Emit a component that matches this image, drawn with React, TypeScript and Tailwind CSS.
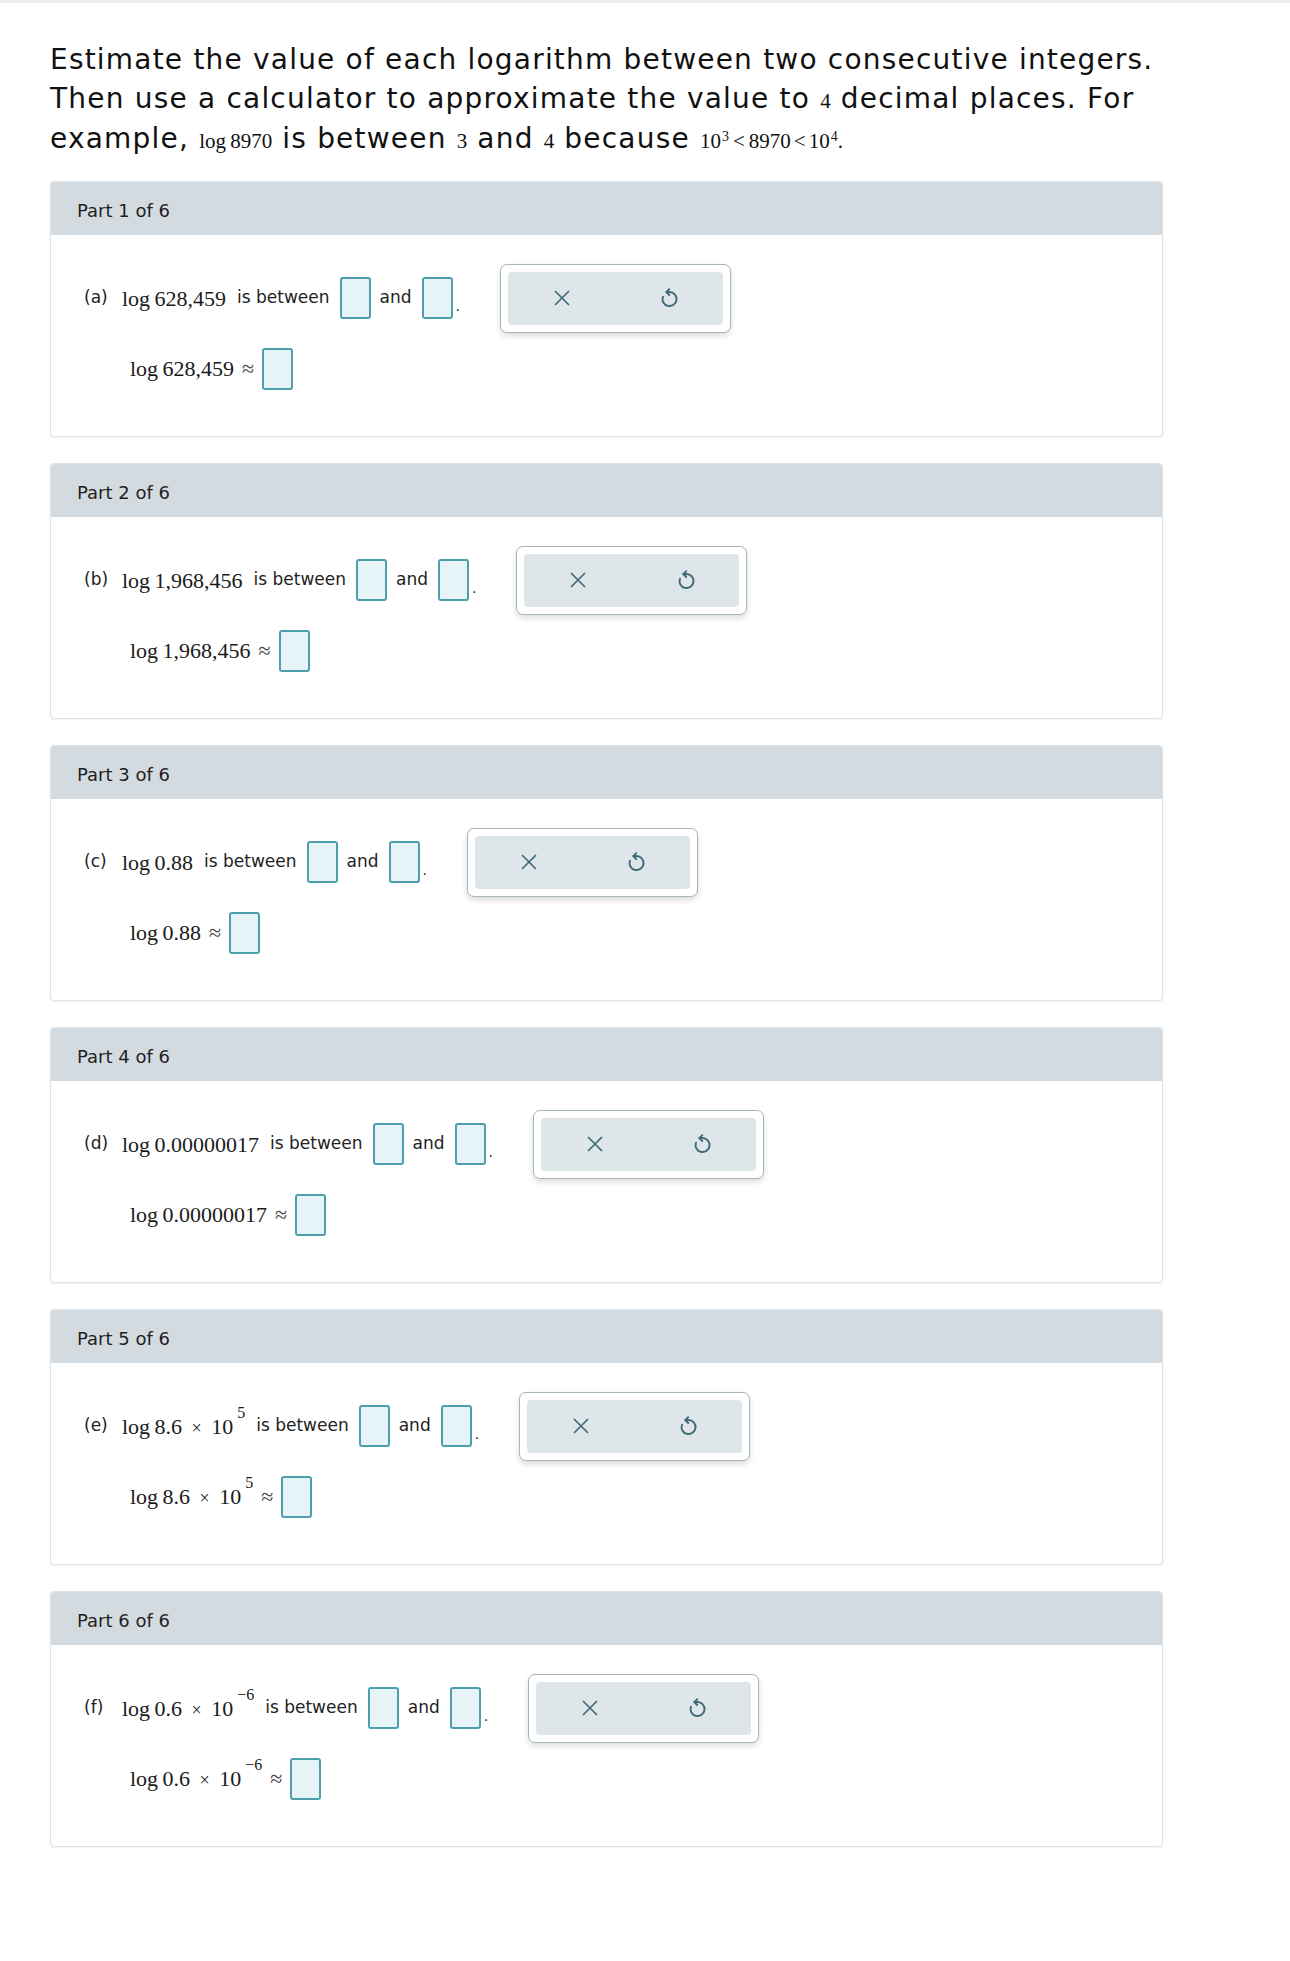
import type { ReactNode } from "react"

const sans = "font-['DejaVu_Sans',Verdana,sans-serif]"
const serif = "font-['Liberation_Serif','Times_New_Roman',serif]"

function XIcon() {
  return (
    <svg width="18" height="18" viewBox="0 0 18 18" fill="none" stroke="#3f6a77" strokeWidth="1.7" strokeLinecap="round">
      <path d="M2.5 2.5L15.5 15.5M15.5 2.5L2.5 15.5" />
    </svg>
  )
}

function UndoIcon() {
  return (
    <svg width="26" height="28" viewBox="0 0 24 26" fill="none" stroke="#3f6a77" strokeWidth="1.8" strokeLinecap="round" strokeLinejoin="round">
      <path d="M6.4 11.8A6.5 6.5 0 1 0 12.5 7.5H9.6" />
      <path d="M12.2 4.8L9.5 7.5L12.2 10.2" />
    </svg>
  )
}

function Box() {
  return <span className="inline-block w-[31px] h-[42px] rounded-[3px] border-2 border-[#4d9fae] bg-[#e6f3f7]" />
}

function Sup({ children }: { children: ReactNode }) {
  return <span className="relative -top-[16px] ml-[4px] text-[16px]">{children}</span>
}

function Actions() {
  return (
    <div className="ml-[40px] w-[231px] h-[69px] p-[7px] rounded-[7px] border-[1.5px] border-[#a3b5bd] bg-white shadow-[0_3px_6px_rgba(0,0,0,0.14)]">
      <div className="flex h-full rounded-[4px] bg-[#dfe6e9]">
        <div className="flex-1 flex items-center justify-center">
          <XIcon />
        </div>
        <div className="flex-1 flex items-center justify-center">
          <UndoIcon />
        </div>
      </div>
    </div>
  )
}

function Part({ n, letter, expr }: { n: number; letter: string; expr: ReactNode }) {
  return (
    <div className="mt-[26px] first:mt-0 h-[256px] rounded-[4px] border border-[#dde3e6] bg-white overflow-hidden shadow-[0_1px_2px_rgba(0,0,0,0.07)]">
      <div className={`h-[53px] flex items-center pl-[26px] pt-[4px] bg-[#d3dbe0] text-[18px] text-[#1f1f1f] ${sans}`}>
        Part {n} of 6
      </div>
      <div className={`pt-[29px] pl-[33px] text-[17px] text-[#222] ${sans}`}>
        <div className="flex items-center h-[69px]">
          <span className="w-[38px]">({letter})</span>
          <span className={`${serif} text-[22px] text-[#1a1a1a]`}>{expr}</span>
          <span className="ml-[11px]">is between</span>
          <span className="ml-[10px] flex">
            <Box />
          </span>
          <span className="ml-[9px]">and</span>
          <span className="ml-[10px] flex">
            <Box />
          </span>
          <span className="ml-[3px] self-end mb-[16px] text-[14px]">.</span>
          <Actions />
        </div>
        <div className="mt-[15px] pl-[46px] flex items-center h-[42px]">
          <span className={`${serif} text-[22px] text-[#1a1a1a]`}>{expr}</span>
          <span className={`${serif} ml-[8px] text-[22px] text-[#444]`}>≈</span>
          <span className="ml-[8px] flex">
            <Box />
          </span>
        </div>
      </div>
    </div>
  )
}

export default function App() {
  const parts: { letter: string; expr: ReactNode }[] = [
    { letter: "a", expr: <>log&#8201;628,459</> },
    { letter: "b", expr: <>log&#8201;1,968,456</> },
    { letter: "c", expr: <>log&#8201;0.88</> },
    { letter: "d", expr: <>log&#8201;0.00000017</> },
    {
      letter: "e",
      expr: (
        <>
          log&#8201;8.6 <span className="mx-[4px] text-[18px]">×</span> 10<Sup>5</Sup>
        </>
      ),
    },
    {
      letter: "f",
      expr: (
        <>
          log&#8201;0.6 <span className="mx-[4px] text-[18px]">×</span> 10<Sup>−6</Sup>
        </>
      ),
    },
  ]

  return (
    <div className="min-h-screen bg-white">
      <div className="h-[3px] bg-[#eceff1]" />
      <div className="pl-[50px] pt-[38px] pb-[60px]">
        <div className="w-[1113px]">
          <p className={`text-[28px] leading-[38.5px] tracking-[1.2px] text-[#111] ${sans}`}>
            Estimate the value of each logarithm between two consecutive integers. Then use a calculator to
            approximate the value to <span className={`${serif} text-[21px] tracking-normal`}>4</span> decimal places. For
            example, <span className={`${serif} text-[21px] tracking-normal`}>log&#8201;8970</span> is between{" "}
            <span className={`${serif} text-[21px] tracking-normal`}>3</span> and{" "}
            <span className={`${serif} text-[21px] tracking-normal`}>4</span> because{" "}
            <span className={`${serif} text-[21px] tracking-normal`}>
              10<sup className="text-[14px] ml-[1px]">3</sup>
              <span className="mx-[4px]">&lt;</span>8970<span className="mx-[3px]">&lt;</span>10
              <sup className="text-[14px] ml-[1px]">4</sup>.
            </span>
          </p>
          <div className="mt-[20px]">
            {parts.map((p, i) => (
              <Part key={p.letter} n={i + 1} letter={p.letter} expr={p.expr} />
            ))}
          </div>
        </div>
      </div>
    </div>
  )
}
